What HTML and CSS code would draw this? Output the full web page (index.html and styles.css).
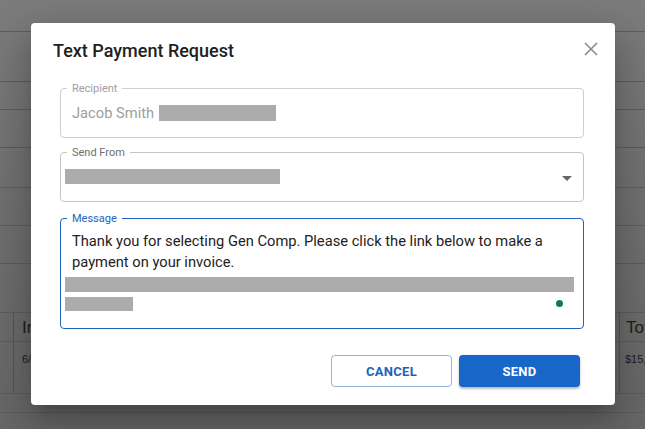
FILE: index.html
```html
<!DOCTYPE html>
<html>
<head>
<meta charset="utf-8">
<link rel="stylesheet" href="styles.css">
</head>
<body>
<div class="page">
  <div class="row h32"></div>
  <div class="row h50"></div>
  <div class="row h28"></div>
  <div class="row h38"></div>
  <div class="row h40"></div>
  <div class="row h38"></div>
  <div class="row h38"></div>
  <div class="row h49"></div>
  <div class="row trow thead">
    <div class="cell"></div>
    <div class="cell"><span class="th">Inv</span></div>
    <div class="cell"><span class="th">Tot</span></div>
  </div>
  <div class="row trow tdata">
    <div class="cell"></div>
    <div class="cell"><span class="td">6/12</span></div>
    <div class="cell"><span class="td">$15,</span></div>
  </div>
  <div class="row h19"></div>
  <div class="row rest"></div>
</div>

<div class="modal">
  <div class="modal-head">
    <h2 class="title">Text Payment Request</h2>
    <button class="close" aria-label="Close">
      <svg width="14" height="14" viewBox="0 0 14 14"><path d="M1 1L13 13M13 1L1 13" stroke="#8a8a8a" stroke-width="1.6" fill="none"/></svg>
    </button>
  </div>
  <div class="fields">
    <div class="field disabled">
      <span class="label">Recipient</span>
      <div class="value"><span>Jacob Smith</span><span class="redact r-recipient"></span></div>
    </div>
    <div class="field">
      <span class="label">Send From</span>
      <div class="value select"><span class="redact r-from"></span><span class="arrow"></span></div>
    </div>
    <div class="field focused message">
      <span class="label">Message</span>
      <div class="msg-text">Thank you for selecting Gen Comp. Please click the link below to make a payment on your invoice.</div>
      <span class="redact r-line1"></span>
      <span class="redact r-line2"></span>
      <span class="dot"></span>
    </div>
  </div>
  <div class="actions">
    <button class="btn cancel">CANCEL</button>
    <button class="btn send">SEND</button>
  </div>
</div>
</body>
</html>
```

FILE: styles.css
```css
* { box-sizing: border-box; }
html, body { margin: 0; padding: 0; }
body {
  width: 645px;
  height: 429px;
  overflow: hidden;
  font-family: Roboto, "Liberation Sans", Arial, sans-serif;
  position: relative;
}
.page {
  width: 645px;
  height: 429px;
  display: flex;
  flex-direction: column;
  background: linear-gradient(180deg, #7c7c7c 0%, #707070 50%, #676767 100%);
}
.row { border-bottom: 1px solid #5d5d5d; flex: none; }
.h32 { height: 32px; }
.h50 { height: 50px; }
.h28 { height: 28px; }
.h38 { height: 38px; }
.h40 { height: 40px; }
.h49 { height: 49px; }
.h19 { height: 19px; }
.rest { flex: 1; border-bottom: none; }
.trow {
  display: grid;
  grid-template-columns: 13px 1fr 26px;
}
.thead { height: 29px; }
.tdata { height: 52px; }
.cell { border-left: 1px solid #555; overflow: hidden; white-space: nowrap; }
.cell:first-child { border-left: none; }
.thead .cell:nth-child(2) { padding: 5px 0 0 8px; }
.thead .cell:nth-child(3) { padding: 5px 0 0 6px; }
.tdata .cell:nth-child(2) { padding: 6px 0 0 8px; }
.tdata .cell:nth-child(3) { padding: 6px 0 0 5px; }
.th { font-size: 17px; color: #1d1d1d; font-family: "Liberation Sans", Arial, sans-serif; }
.td { font-size: 11px; color: #1d1d1d; font-family: "Liberation Sans", Arial, sans-serif; }

.modal {
  position: absolute;
  left: 31px;
  top: 23px;
  width: 584px;
  height: 382px;
  background: #fff;
  border-radius: 4px;
  box-shadow: 0 11px 15px -7px rgba(0,0,0,.2), 0 24px 38px 3px rgba(0,0,0,.14), 0 9px 46px 8px rgba(0,0,0,.12);
  display: flex;
  flex-direction: column;
}
.modal-head {
  display: flex;
  justify-content: space-between;
  align-items: flex-start;
  padding: 16px 17px 0 22px;
}
.title {
  margin: 0;
  font-size: 18px;
  line-height: 24px;
  font-weight: 500;
  color: #212121;
}
.close {
  border: none;
  background: none;
  padding: 0;
  margin-top: 3px;
  width: 14px;
  height: 14px;
  display: flex;
}
.fields {
  display: flex;
  flex-direction: column;
  gap: 14px;
  padding: 25px 31px 0 29px;
}
.field {
  position: relative;
  border: 1px solid #c4c4c4;
  border-radius: 4px;
  height: 50px;
}
.label {
  position: absolute;
  top: -7px;
  left: 6px;
  padding: 0 5px 0 5px;
  background: #fff;
  font-size: 11px;
  line-height: 13px;
  color: #6e6e6e;
}
.disabled .label { color: #a0a0a0; }
.disabled { border-color: #cfcfcf; }
.value {
  display: flex;
  align-items: center;
  height: 100%;
  padding: 0 11px;
  font-size: 14.7px;
  color: #9e9e9e;
}
.redact { display: block; background: #ababab; }
.r-recipient { width: 117px; height: 16px; margin-left: 5px; margin-top: -1px; }
.select { padding-left: 4px; justify-content: space-between; padding-right: 11px; }
.r-from { width: 215px; height: 15px; margin-top: -2px; }
.arrow {
  width: 0; height: 0;
  border-left: 5px solid transparent;
  border-right: 5px solid transparent;
  border-top: 5px solid #666;
  margin-top: 2px;
}
.focused { border-color: #1d63bf; }
.focused .label { color: #1d63bf; }
.message {
  height: auto;
  margin-top: 2px;
  padding: 12px 10px 17px 4px;
}
.msg-text {
  font-size: 14.7px;
  line-height: 21px;
  color: #222;
  padding-left: 7px;
}
.r-line1 { width: 509px; height: 15px; margin-top: 4px; }
.r-line2 { width: 68px; height: 14px; margin-top: 5px; }
.dot {
  position: absolute;
  right: 20px;
  top: 81px;
  width: 7px;
  height: 7px;
  border-radius: 50%;
  background: #0b7a5c;
}
.actions {
  display: flex;
  justify-content: flex-end;
  gap: 7px;
  padding: 26px 35px 0 0;
}
.btn {
  width: 121px;
  height: 32px;
  border-radius: 4px;
  font-family: Roboto, "Liberation Sans", Arial, sans-serif;
  font-size: 13px;
  font-weight: 700;
  letter-spacing: 0.3px;
  cursor: pointer;
}
.cancel {
  background: #fff;
  color: #1c63bd;
  border: 1px solid #93b3dd;
}
.send {
  background: #1867c8;
  color: #fff;
  border: none;
  box-shadow: 0 2px 2px rgba(0,0,0,.2), 0 1px 4px rgba(0,0,0,.12);
}
```
